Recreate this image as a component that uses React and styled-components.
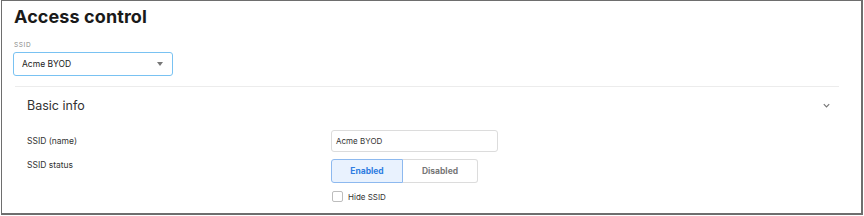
import React from 'react';
import styled, { createGlobalStyle } from 'styled-components';

const GlobalStyle = createGlobalStyle`
  html, body {
    margin: 0;
    padding: 0;
    background: #ffffff;
  }
  body {
    font-family: Inter, "Liberation Sans", sans-serif;
    color: #222;
  }
`;

const Frame = styled.div`
  box-sizing: border-box;
  width: 862px;
  height: 215px;
  margin-left: 1px;
  border: 2px solid #6e6e6e;
  border-left-width: 1px;
  border-top-width: 1px;
  padding: 6px 0 0 11px;
  overflow: hidden;
`;

const Title = styled.h1`
  margin: 0 0 0 1px;
  font-size: 18px;
  font-weight: 700;
  letter-spacing: 0.1px;
  line-height: 20px;
  color: #1a1a1a;
`;

const FieldLabel = styled.div`
  margin: 14px 0 0 1px;
  font-size: 6.5px;
  letter-spacing: 0.6px;
  color: #8a8a8a;
  line-height: 8px;
  text-transform: uppercase;
`;

const Select = styled.div`
  box-sizing: border-box;
  margin-top: 3px;
  width: 160px;
  height: 24px;
  border: 1px solid #79c2f2;
  border-radius: 3px;
  display: flex;
  align-items: center;
  justify-content: space-between;
  padding: 0 9px 0 8px;
  font-size: 8.5px;
  color: #222;
`;

const Caret = styled.span`
  width: 0;
  height: 0;
  border-left: 3.5px solid transparent;
  border-right: 3.5px solid transparent;
  border-top: 4px solid #777;
`;

const Divider = styled.div`
  margin: 10px 22px 0 2px;
  height: 1px;
  background: #ececec;
`;

const Section = styled.section`
  padding: 0 34px 0 14px;
`;

const SectionHeader = styled.div`
  display: flex;
  align-items: center;
  justify-content: space-between;
  height: 36px;
`;

const SectionTitle = styled.h2`
  margin: 0;
  font-size: 12.5px;
  font-weight: 400;
  color: #333;
`;

const Chevron = styled.svg`
  width: 9px;
  height: 9px;
  margin-right: -4px;
`;

const Row = styled.div`
  display: grid;
  grid-template-columns: 304px 1fr;
  align-items: ${({ $top }) => ($top ? 'start' : 'center')};
  margin-top: ${({ $gap }) => $gap || 0}px;
`;

const RowLabel = styled.div`
  font-size: 8.5px;
  color: #333;
  line-height: ${({ $lh }) => $lh || 12}px;
`;

const TextInput = styled.div`
  box-sizing: border-box;
  width: 167px;
  height: 22px;
  border: 1px solid #dcdcdc;
  border-radius: 3px;
  display: flex;
  align-items: center;
  padding-left: 4px;
  font-size: 8px;
  color: #333;
`;

const Segmented = styled.div`
  display: flex;
  width: 147px;
  height: 24px;
`;

const Segment = styled.div`
  box-sizing: border-box;
  flex: ${({ $w }) => `0 0 ${$w}px`};
  display: flex;
  align-items: center;
  justify-content: center;
  font-size: 8.5px;
  font-weight: 700;
  border: 1px solid ${({ $active }) => ($active ? '#8db9ef' : '#dcdcdc')};
  border-left-width: ${({ $active }) => ($active ? 1 : 0)}px;
  border-radius: ${({ $active }) => ($active ? '3px 0 0 3px' : '0 3px 3px 0')};
  background: ${({ $active }) => ($active ? '#e9f2fe' : '#fff')};
  color: ${({ $active }) => ($active ? '#2f7de1' : '#777')};
`;

const CheckRow = styled.label`
  display: flex;
  align-items: center;
  gap: 5px;
  margin-top: 8px;
  font-size: 8px;
  color: #333;
`;

const Box = styled.span`
  box-sizing: border-box;
  width: 11px;
  height: 11px;
  border: 1px solid #bdbdbd;
  border-radius: 2px;
  margin-left: 1px;
`;

export default function App() {
  return (
    <>
      <GlobalStyle />
      <Frame>
        <Title>Access control</Title>
        <FieldLabel>SSID</FieldLabel>
        <Select>
          <span>Acme BYOD</span>
          <Caret />
        </Select>
        <Divider />
        <Section>
          <SectionHeader>
            <SectionTitle>Basic info</SectionTitle>
            <Chevron viewBox="0 0 10 10">
              <path d="M2 3.5 L5 6.5 L8 3.5" fill="none" stroke="#777" strokeWidth="1.3" />
            </Chevron>
          </SectionHeader>
          <Row $gap={7}>
            <RowLabel>SSID (name)</RowLabel>
            <TextInput>Acme BYOD</TextInput>
          </Row>
          <Row $gap={7} $top>
            <RowLabel $lh={12}>SSID status</RowLabel>
            <div>
              <Segmented>
                <Segment $active $w={72}>Enabled</Segment>
                <Segment $w={75}>Disabled</Segment>
              </Segmented>
              <CheckRow>
                <Box />
                Hide SSID
              </CheckRow>
            </div>
          </Row>
        </Section>
      </Frame>
    </>
  );
}
